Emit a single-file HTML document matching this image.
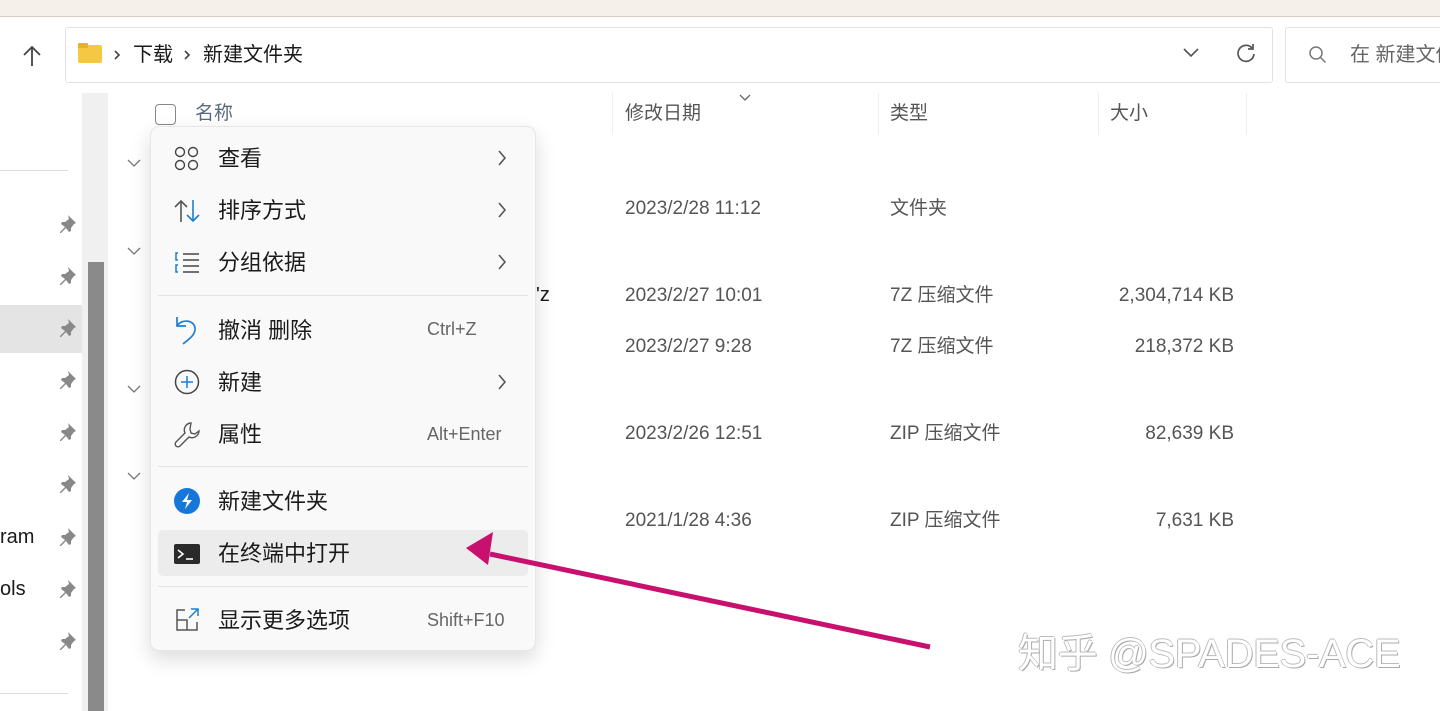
<!DOCTYPE html>
<html><head><meta charset="utf-8"><style>
*{margin:0;padding:0;box-sizing:border-box}
body{width:1440px;height:711px;overflow:hidden;background:#fff;font-family:"Liberation Sans","Noto Sans CJK SC",sans-serif;position:relative;color:#1a1a1a}
.a{position:absolute;white-space:nowrap}
.g{color:#555;font-size:19px;line-height:24px}
.mi{position:absolute;left:218px;font-size:22px;color:#1b1b1b;line-height:28px}
.sc{position:absolute;font-size:18px;color:#666}
.sep{position:absolute;left:158px;width:370px;height:1px;background:#e3e3e3}
.pin{position:absolute;left:59px}
.chev{position:absolute;left:496px}
</style></head><body>
<div class="a" style="left:0;top:0;width:1440px;height:17px;background:#f6f0ea;border-bottom:1px solid #d8cfc6"></div>
<svg class="a" style="left:21px;top:44px" width="22" height="24" fill="none" stroke="#444" stroke-width="1.8"><path d="M11 22V3M3 11l8-8 8 8"/></svg>
<div class="a" style="left:65px;top:27px;width:1208px;height:56px;border:1px solid #e2e2e2;border-radius:3px"></div>
<div class="a" style="left:78px;top:45px;width:24px;height:18px;background:#f5c842;border-radius:2px"></div>
<div class="a" style="left:78px;top:43px;width:10px;height:5px;background:#e6b22e;border-radius:1px"></div>
<svg class="a" style="left:112px;top:49px" width="10" height="12" fill="none" stroke="#444" stroke-width="1.6"><path d="M3 2l4 4-4 4"/></svg>
<div class="a" style="left:133px;top:41px;font-size:20px;line-height:28px">下载</div>
<svg class="a" style="left:182px;top:49px" width="10" height="12" fill="none" stroke="#444" stroke-width="1.6"><path d="M3 2l4 4-4 4"/></svg>
<div class="a" style="left:203px;top:41px;font-size:20px;line-height:28px">新建文件夹</div>
<svg class="a" style="left:1182px;top:47px" width="18" height="12"><path d="M2 2l7 7 7-7" fill="none" stroke="#555" stroke-width="1.6"/></svg>
<svg class="a" style="left:1235px;top:42px" width="22" height="22"><path d="M17 6A8 8 0 1 0 19 12" fill="none" stroke="#555" stroke-width="1.7"/><path d="M18 2v5h-5" fill="none" stroke="#555" stroke-width="1.7"/></svg>
<div class="a" style="left:1285px;top:27px;width:170px;height:56px;border:1px solid #e2e2e2;border-radius:3px"></div>
<svg class="a" style="left:1308px;top:45px" width="20" height="20"><circle cx="8" cy="8" r="6" fill="none" stroke="#777" stroke-width="1.5"/><path d="M12.5 12.5l5 5" stroke="#777" stroke-width="1.5"/></svg>
<div class="a" style="left:1350px;top:41px;font-size:20px;color:#666;line-height:28px">在 新建文件夹</div>
<!-- sidebar -->
<div class="a" style="left:0;top:170px;width:68px;height:1px;background:#ddd"></div>
<div class="a" style="left:0;top:305px;width:82px;height:48px;background:#e4e4e4"></div>
<div class="a" style="left:0;top:693px;width:68px;height:1px;background:#ddd"></div>
<div class="a" style="left:82px;top:93px;width:26px;height:618px;background:#f0f0f0"></div>
<div class="a" style="left:88px;top:262px;width:16px;height:449px;background:#8a8a8a"></div>
<svg width="0" height="0" style="position:absolute"><defs><g id="pn"><path d="M9 1l8 8-2 1-3 4 0 3-2 1-3-4-5 5-1 0 0-1 5-5-4-3 1-2 3 0 4-3z" fill="#888"/></g></defs></svg>
<svg class="pin" style="top:214px" width="18" height="20"><use href="#pn"/></svg>
<svg class="pin" style="top:266px" width="18" height="20"><use href="#pn"/></svg>
<svg class="pin" style="top:318px" width="18" height="20"><use href="#pn"/></svg>
<svg class="pin" style="top:370px" width="18" height="20"><use href="#pn"/></svg>
<svg class="pin" style="top:422px" width="18" height="20"><use href="#pn"/></svg>
<svg class="pin" style="top:474px" width="18" height="20"><use href="#pn"/></svg>
<svg class="pin" style="top:527px" width="18" height="20"><use href="#pn"/></svg>
<svg class="pin" style="top:579px" width="18" height="20"><use href="#pn"/></svg>
<svg class="pin" style="top:631px" width="18" height="20"><use href="#pn"/></svg>
<div class="a" style="left:0;top:526px;font-size:20px">ram</div>
<div class="a" style="left:0;top:578px;font-size:20px">ols</div>
<!-- header -->
<div class="a" style="left:155px;top:104px;width:21px;height:21px;border:1.5px solid #888;border-radius:4px"></div>
<div class="a" style="left:195px;top:101px;font-size:19px;color:#5a6a80;line-height:26px">名称</div>
<div class="a g" style="left:625px;top:102px">修改日期</div>
<svg class="a" style="left:739px;top:94px" width="12" height="8" fill="none" stroke="#666" stroke-width="1.3"><path d="M1 1l5 5 5-5"/></svg>
<div class="a g" style="left:890px;top:102px">类型</div>
<div class="a g" style="left:1110px;top:102px">大小</div>
<div class="a" style="left:612px;top:93px;width:1px;height:42px;background:#eee"></div>
<div class="a" style="left:878px;top:93px;width:1px;height:42px;background:#eee"></div>
<div class="a" style="left:1098px;top:93px;width:1px;height:42px;background:#eee"></div>
<div class="a" style="left:1246px;top:93px;width:1px;height:42px;background:#eee"></div>
<svg class="a" style="left:127px;top:159px" width="14" height="9" fill="none" stroke="#777" stroke-width="1.3"><path d="M1 1l6 6 6-6"/></svg>
<svg class="a" style="left:127px;top:247px" width="14" height="9" fill="none" stroke="#777" stroke-width="1.3"><path d="M1 1l6 6 6-6"/></svg>
<svg class="a" style="left:127px;top:385px" width="14" height="9" fill="none" stroke="#777" stroke-width="1.3"><path d="M1 1l6 6 6-6"/></svg>
<svg class="a" style="left:127px;top:472px" width="14" height="9" fill="none" stroke="#777" stroke-width="1.3"><path d="M1 1l6 6 6-6"/></svg>
<div class="a" style="left:536px;top:284px;font-size:20px">'z</div>
<div class="a g" style="left:625px;top:197px">2023/2/28 11:12</div><div class="a g" style="left:890px;top:197px">文件夹</div>
<div class="a g" style="left:625px;top:284px">2023/2/27 10:01</div><div class="a g" style="left:890px;top:284px">7Z 压缩文件</div><div class="a g" style="right:206px;top:284px">2,304,714 KB</div>
<div class="a g" style="left:625px;top:335px">2023/2/27 9:28</div><div class="a g" style="left:890px;top:335px">7Z 压缩文件</div><div class="a g" style="right:206px;top:335px">218,372 KB</div>
<div class="a g" style="left:625px;top:422px">2023/2/26 12:51</div><div class="a g" style="left:890px;top:422px">ZIP 压缩文件</div><div class="a g" style="right:206px;top:422px">82,639 KB</div>
<div class="a g" style="left:625px;top:509px">2021/1/28 4:36</div><div class="a g" style="left:890px;top:509px">ZIP 压缩文件</div><div class="a g" style="right:206px;top:509px">7,631 KB</div>
<!-- menu -->
<div class="a" style="left:150px;top:126px;width:386px;height:525px;background:#f9f9f9;border:1px solid #e6e6e6;border-radius:9px;box-shadow:0 8px 20px rgba(0,0,0,.14)">
<div class="a" style="left:7px;top:403px;width:370px;height:46px;background:#ececec;border-radius:5px"></div>
</div>
<svg class="a" style="left:174px;top:146px" width="26" height="26" fill="none" stroke="#444" stroke-width="1.4"><circle cx="6" cy="6" r="4.5"/><circle cx="19" cy="6" r="4.5"/><circle cx="6" cy="19" r="4.5"/><circle cx="19" cy="19" r="4.5"/></svg>
<svg class="a" style="left:173px;top:198px" width="28" height="26" fill="none" stroke-width="1.6"><path d="M8 24V3M2 9l6-6 6 6" stroke="#555"/><path d="M20 2v21M14 17l6 6 6-6" stroke="#1d7fd1"/></svg>
<svg class="a" style="left:174px;top:250px" width="28" height="26" fill="none" stroke-width="1.5"><path d="M4 3H2v7h2M4 15H2v7h2" stroke="#1d7fd1"/><path d="M9 4h16M9 10h16M9 16h16M9 22h16" stroke="#444"/></svg>
<svg class="a" style="left:174px;top:315px" width="26" height="30" fill="none" stroke="#1d7fd1" stroke-width="1.7"><path d="M3 2v9h9"/><path d="M3 11C8 3 22 5 21 15c-1 6-6 9-12 14"/></svg>
<svg class="a" style="left:174px;top:369px" width="26" height="26" fill="none" stroke-width="1.5"><circle cx="13" cy="13" r="11.5" stroke="#444"/><path d="M13 7v12M7 13h12" stroke="#1d7fd1"/></svg>
<svg class="a" style="left:173px;top:421px" width="28" height="28" fill="none" stroke="#555" stroke-width="1.4"><path d="M18 2a7 7 0 0 0-6 10L3 21a2.5 2.5 0 0 0 4 4l9-9a7 7 0 0 0 10-6l-4 3-4-1-1-4z"/></svg>
<svg class="a" style="left:174px;top:488px" width="26" height="26"><circle cx="13" cy="13" r="13" fill="#1677d8"/><path d="M15 5l-7 9h5l-2 7 7-9h-5z" fill="#fff"/></svg>
<svg class="a" style="left:174px;top:544px" width="26" height="20"><rect width="26" height="20" rx="2" fill="#2a2a2a"/><path d="M4 6l5 4-5 4" stroke="#fff" stroke-width="1.6" fill="none"/><path d="M12 15h7" stroke="#fff" stroke-width="1.6"/></svg>
<svg class="a" style="left:174px;top:607px" width="26" height="26" fill="none" stroke-width="1.5"><path d="M11 3H3v20h20v-8" stroke="#555"/><path d="M3 13h10v10" stroke="#555"/><path d="M15 11l9-9M17 2h7v7" stroke="#1d7fd1"/></svg>
<div class="mi" style="top:145px">查看</div><svg class="chev" style="top:149px" width="12" height="18" fill="none" stroke="#555" stroke-width="1.6"><path d="M3 2l6 7-6 7"/></svg>
<div class="mi" style="top:197px">排序方式</div><svg class="chev" style="top:201px" width="12" height="18" fill="none" stroke="#555" stroke-width="1.6"><path d="M3 2l6 7-6 7"/></svg>
<div class="mi" style="top:249px">分组依据</div><svg class="chev" style="top:253px" width="12" height="18" fill="none" stroke="#555" stroke-width="1.6"><path d="M3 2l6 7-6 7"/></svg>
<div class="sep" style="top:295px"></div>
<div class="mi" style="top:317px">撤消 删除</div><div class="sc" style="left:427px;top:319px">Ctrl+Z</div>
<div class="mi" style="top:369px">新建</div><svg class="chev" style="top:373px" width="12" height="18" fill="none" stroke="#555" stroke-width="1.6"><path d="M3 2l6 7-6 7"/></svg>
<div class="mi" style="top:421px">属性</div><div class="sc" style="left:427px;top:424px">Alt+Enter</div>
<div class="sep" style="top:466px"></div>
<div class="mi" style="top:488px">新建文件夹</div>
<div class="mi" style="top:540px">在终端中打开</div>
<div class="sep" style="top:586px"></div>
<div class="mi" style="top:607px">显示更多选项</div><div class="sc" style="left:427px;top:610px">Shift+F10</div>
<!-- arrow -->
<svg class="a" style="left:0;top:0" width="1440" height="711"><line x1="930" y1="647" x2="490" y2="554" stroke="#c8106e" stroke-width="5"/><path d="M466 548l27-16-5 33z" fill="#c8106e"/></svg>
<div class="a" style="left:1018px;top:630px;font-size:40px;color:#fff;line-height:48px;letter-spacing:-0.3px;text-shadow:1px 1px 0 #aaa,-1px 0 0 #bbb,0 -1px 0 #bbb">知乎 @SPADES-ACE</div>
</body></html>
